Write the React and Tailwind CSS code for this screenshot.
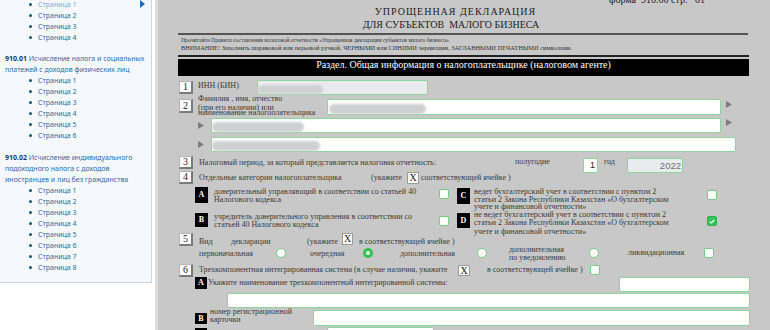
import React from "react";

function Bullet({ children, light, arrow }) {
  return (
    <li className="flex items-center pl-[29px] pr-[6px]">
      <span className="w-[3px] h-[3px] rounded-full bg-[#1d4f82] mr-[6px] shrink-0" />
      <span className={light ? "text-[#7aa9d9]" : "text-[#2f6aa6]"}>{children}</span>
      {arrow && (
        <svg className="ml-auto" width="5" height="8" viewBox="0 0 5 8">
          <path d="M0 0 L5 4 L0 8 Z" fill="#2368ad" />
        </svg>
      )}
    </li>
  );
}

function Sidebar() {
  return (
    <div className="w-[152px] shrink-0 self-start h-[283px] bg-[#f5f9fd] border-r border-b border-[#c8d5e3] font-['Noto_Sans',sans-serif] text-[7px] leading-[11px] overflow-hidden">
      <div className="-mt-[1.5px]">
        <ul>
          <Bullet light arrow>Страница 1</Bullet>
          <Bullet>Страница 2</Bullet>
          <Bullet>Страница 3</Bullet>
          <Bullet>Страница 4</Bullet>
        </ul>
        <p className="mt-[10px] pl-[5px] text-[#2f6aa6] whitespace-nowrap">
          <b className="text-[#17375e]">910.01</b> Исчисление налога и социальных
          <br />
          платежей с доходов физических лиц
        </p>
        <ul>
          <Bullet>Страница 1</Bullet>
          <Bullet>Страница 2</Bullet>
          <Bullet>Страница 3</Bullet>
          <Bullet>Страница 4</Bullet>
          <Bullet>Страница 5</Bullet>
          <Bullet>Страница 6</Bullet>
        </ul>
        <p className="mt-[11px] pl-[5px] text-[#2f6aa6] whitespace-nowrap">
          <b className="text-[#17375e]">910.02</b> Исчисление индивидуального
          <br />
          подоходного налога с доходов
          <br />
          иностранцев и лиц без гражданства
        </p>
        <ul>
          <Bullet>Страница 1</Bullet>
          <Bullet>Страница 2</Bullet>
          <Bullet>Страница 3</Bullet>
          <Bullet>Страница 4</Bullet>
          <Bullet>Страница 5</Bullet>
          <Bullet>Страница 6</Bullet>
          <Bullet>Страница 7</Bullet>
          <Bullet>Страница 8</Bullet>
        </ul>
      </div>
    </div>
  );
}

function NumBox({ n, className = "" }) {
  return (
    <div
      className={
        "ml-[1px] w-[14px] h-[13px] shrink-0 bg-white border-l border-t border-l-[#b5b5b5] border-t-[#b5b5b5] border-r-2 border-b-2 border-r-[#7a7a7a] border-b-[#7a7a7a] flex items-center justify-center text-[10px] leading-none text-[#222] " +
        className
      }
    >
      {n}
    </div>
  );
}

function XBox({ className = "" }) {
  return (
    <div
      className={
        "shrink-0 bg-white border border-[#9a9a9a] flex items-center justify-center text-[10px] leading-none text-[#222] " +
        className
      }
    >
      X
    </div>
  );
}

function Letter({ l, className = "" }) {
  return (
    <div
      className={
        "shrink-0 bg-black text-white font-bold text-[8px] leading-none flex items-center justify-center " +
        className
      }
    >
      {l}
    </div>
  );
}

function Check({ checked, className = "" }) {
  return checked ? (
    <div
      className={
        "w-[10px] h-[10px] shrink-0 rounded-[2px] bg-[#35c457] border border-[#2fb24e] flex items-center justify-center " +
        className
      }
    >
      <svg width="6" height="5" viewBox="0 0 6 5">
        <path d="M0.6 2.6 L2.3 4 L5.4 0.8" stroke="white" strokeWidth="1.2" fill="none" />
      </svg>
    </div>
  ) : (
    <div
      className={
        "w-[10px] h-[10px] shrink-0 rounded-[2px] bg-white border border-[#72cc84] " + className
      }
    />
  );
}

function Radio({ checked, className = "" }) {
  return checked ? (
    <div
      className={
        "w-[10px] h-[10px] shrink-0 rounded-full bg-[#2fc24f] flex items-center justify-center " + className
      }
    >
      <div className="w-[4px] h-[4px] rounded-full bg-white" />
    </div>
  ) : (
    <div className={"w-[10px] h-[10px] shrink-0 rounded-full bg-white border border-[#72cc84] " + className} />
  );
}

function Pill({ className = "" }) {
  return <div className={"rounded-full bg-[#cfd0d2] blur-[1px] " + className} />;
}

function Input({ className = "", children }) {
  return (
    <div className={"shrink-0 rounded-[2px] border border-[#8cd59d] " + className}>{children}</div>
  );
}

function ArrowR({ className = "" }) {
  return (
    <svg className={"shrink-0 " + className} width="6" height="7" viewBox="0 0 6 7">
      <path d="M0 0 L6 3.5 L0 7 Z" fill="#7d7d7d" />
    </svg>
  );
}

function Main() {
  return (
    <div className="flex-1 bg-[#c8c8c8] pl-[20px] font-['Liberation_Serif','Times_New_Roman',serif] text-[#3a3a3a] text-[8px] leading-[9px] overflow-hidden">
      <div className="w-[572px]">
        {/* form number */}
        <div className="-mt-[6px] h-[12px] text-[10px] leading-[12px] text-right pr-[45px] text-[#222] whitespace-pre">
          форма  910.00 стр.   01
        </div>
        {/* title */}
        <div className="h-[25px] pr-[26px] text-center text-[10px] leading-[12.5px] text-[#222]">
          <div className="pl-[9px] tracking-[1px] whitespace-nowrap">УПРОЩЕННАЯ ДЕКЛАРАЦИЯ</div>
          <div className="whitespace-pre">ДЛЯ СУБЪЕКТОВ  МАЛОГО БИЗНЕСА</div>
        </div>
        <div className="mt-[2px] w-[570px] h-[2px] bg-[#555]" />
        <div className="mt-[1px] pl-[3px] leading-[8px] text-[#333] whitespace-nowrap">
          <div className="text-[5.7px]">
            Прочитайте Правила составления налоговой отчетности «Упрощенная декларация субъектов малого бизнеса».
          </div>
          <div className="text-[6.4px]">
            ВНИМАНИЕ! Заполнить шариковой или перьевой ручкой, ЧЕРНЫМИ или СИНИМИ чернилами, ЗАГЛАВНЫМИ ПЕЧАТНЫМИ символами.
          </div>
        </div>
        <div className="mt-[3px] w-[571px] h-[2px] bg-[#222]" />
        <div className="mt-[2px] w-[571px] h-[17px] bg-black text-white text-center text-[10px] leading-[11px]">
          Раздел. Общая информация о налогоплательщике (налоговом агенте)
        </div>

        {/* row 1 */}
        <div className="mt-[4px] h-[15px] flex items-start">
          <NumBox n="1" className="mt-[1px]" />
          <div className="ml-[5px] w-[59px] mt-[0.5px] whitespace-nowrap">ИНН (БИН)</div>
          <Input className="w-[171px] h-[15px] bg-[#e9ebee] flex items-end">
            <Pill className="w-[65px] h-[9px]" />
          </Input>
        </div>

        {/* row 2 */}
        <div className="h-[20px] flex items-start">
          <NumBox n="2" className="mt-[4px] h-[14px]" />
          <div className="ml-[5px] w-[129px] -mt-[1.5px] whitespace-nowrap">
            <div>Фамилия , имя, отчество</div>
            <div>(при его наличии) или</div>
            <div className="-mt-[3.5px]">наименование налогоплательщика</div>
          </div>
          <Input className="mt-[4px] w-[394px] h-[16px] bg-white flex items-end">
            <Pill className="ml-[1px] w-[97px] h-[10px]" />
          </Input>
          <ArrowR className="ml-[5px] mt-[6px]" />
        </div>

        {/* row 2b */}
        <div className="mt-[3px] h-[15px] flex items-center">
          <ArrowR className="ml-[20px]" />
          <Input className="ml-[7px] w-[510px] h-[15px] bg-white flex items-end">
            <Pill className="w-[92px] h-[10px]" />
          </Input>
          <ArrowR className="ml-[5px] -mt-[7px]" />
        </div>

        {/* row 2c */}
        <div className="mt-[4px] h-[15px] flex items-center">
          <ArrowR className="ml-[20px]" />
          <Input className="ml-[7px] w-[525px] h-[15px] bg-white flex items-end">
            <Pill className="w-[108px] h-[10px]" />
          </Input>
        </div>

        {/* row 3 */}
        <div className="mt-[3px] h-[16px] flex items-start">
          <NumBox n="3" className="mt-[1px]" />
          <div className="ml-[6px] w-[316px] mt-[3px] whitespace-nowrap">
            Налоговый период, за который представляется налоговая отчетность:
          </div>
          <div className="w-[68px] mt-[2px]">полугодие</div>
          <Input className="mt-[3px] w-[15px] h-[15px] bg-white flex items-center justify-end pr-[2px] font-['Liberation_Sans',sans-serif] text-[9px] text-[#222]">
            1
          </Input>
          <div className="ml-[6px] w-[23px] mt-[2px]">год</div>
          <Input className="mt-[3px] w-[56px] h-[15px] bg-[#e9ebee] flex items-center justify-end pr-[1px] font-['Liberation_Sans',sans-serif] text-[9.5px] text-[#707070]">
            2022
          </Input>
        </div>

        {/* row 4 */}
        <div className="h-[13px] flex items-start">
          <NumBox n="4" />
          <div className="ml-[6px] w-[172px] mt-[1.5px] whitespace-nowrap">Отдельные категории налогоплательщика</div>
          <div className="w-[36px] mt-[1.5px]">(укажите</div>
          <XBox className="w-[12px] h-[12px] mt-[1px]" />
          <div className="ml-[2px] mt-[1.5px] whitespace-nowrap">соответствующей ячейке )</div>
        </div>

        {/* A / C */}
        <div className="mt-[3px] h-[26px] flex items-start leading-[7.6px]">
          <Letter l="A" className="ml-[17px] w-[13px] h-[16px]" />
          <div className="ml-[6px] w-[225px] mt-[1px]">
            <div className="whitespace-nowrap">доверительный управляющий в соответствии со статьей 40</div>
            <div>Налогового кодекса</div>
          </div>
          <Check className="mt-[2px]" />
          <Letter l="C" className="ml-[8px] w-[13px] h-[16px] mt-[1px]" />
          <div className="ml-[4px] w-[233px] mt-[1px] whitespace-nowrap">
            <div>ведет бухгалтерский учет в соответствии с пунктом 2</div>
            <div>статьи 2 Закона Республики Казахстан «О бухгалтерском</div>
            <div>учете и финансовой отчетности»</div>
          </div>
          <Check className="mt-[3px]" />
        </div>

        {/* B / D */}
        <div className="h-[20px] flex items-start leading-[8.3px]">
          <Letter l="B" className="ml-[17px] w-[13px] h-[14px]" />
          <div className="ml-[6px] w-[225px] -mt-[0.5px] whitespace-nowrap">
            <div>учредитель доверительного управления в соответствии со</div>
            <div>статьей 40 Налогового кодекса</div>
          </div>
          <Check className="mt-[3px]" />
          <Letter l="D" className="ml-[8px] w-[13px] h-[15px]" />
          <div className="ml-[4px] w-[233px] -mt-[2px] whitespace-nowrap">
            <div>не ведет бухгалтерский учет в соответствии с пунктом 2</div>
            <div>статьи 2 Закона Республики Казахстан «О бухгалтерском</div>
            <div>учете и финансовой отчетности»</div>
          </div>
          <Check checked className="mt-[3px]" />
        </div>

        {/* row 5 */}
        <div className="h-[12px] flex items-start">
          <NumBox n="5" className="h-[12px]" />
          <div className="ml-[6px] w-[32px] mt-[3.5px]">Вид</div>
          <div className="w-[76px] mt-[3.5px]">декларации</div>
          <div className="w-[35px] mt-[3.5px]">(укажите</div>
          <XBox className="w-[11px] h-[12px]" />
          <div className="ml-[6px] mt-[3.5px] whitespace-nowrap">в соответствующей ячейке )</div>
        </div>
        <div className="mt-[2px] h-[12px] flex items-start">
          <div className="ml-[21px] w-[77px] mt-[1.5px]">первоначальная</div>
          <Radio className="mt-[1px]" />
          <div className="ml-[24px] w-[53px] mt-[1.5px]">очередная</div>
          <Radio checked className="mt-[1px]" />
          <div className="ml-[27px] w-[77px] mt-[1.5px]">дополнительная</div>
          <Radio className="mt-[1px]" />
          <div className="ml-[22px] w-[80px] -mt-[1px] leading-[7.5px] whitespace-nowrap">
            <div>дополнительная</div>
            <div>по уведомлению</div>
          </div>
          <Radio className="mt-[1px]" />
          <div className="ml-[29px] w-[76px] mt-[1px]">ликвидационная</div>
          <Check className="mt-[1px]" />
        </div>

        {/* row 6 */}
        <div className="mt-[5px] h-[13px] flex items-start">
          <NumBox n="6" />
          <div className="ml-[6px] w-[259px] mt-[0.5px] whitespace-nowrap">
            Трехкомпонентная интегрированная система (в случае наличия, укажите
          </div>
          <XBox className="w-[12px] h-[11px] mt-[1px]" />
          <div className="ml-[17px] w-[103px] mt-[0.5px] whitespace-nowrap">в соответствующей ячейке )</div>
          <Check className="mt-[1px] h-[9px]" />
        </div>

        <div className="h-[15px] flex items-start">
          <Letter l="A" className="ml-[17px] w-[12px] h-[12px]" />
          <div className="ml-[1px] w-[411px] mt-[0.5px] whitespace-nowrap">
            Укажите наименование трехкомпонентной интегрированной системы:
          </div>
          <Input className="w-[131px] h-[15px] bg-white" />
        </div>

        <div className="mt-[1px] h-[15px] flex">
          <Input className="ml-[49px] w-[523px] h-[15px] bg-white" />
        </div>

        <div className="mt-[2px] h-[16px] flex items-start leading-[8.3px]">
          <Letter l="B" className="ml-[17px] w-[12px] h-[11px] mt-[3px]" />
          <div className="ml-[3px] w-[103px] -mt-[2.5px] whitespace-nowrap">
            <div>номер регистрационной</div>
            <div>карточки</div>
          </div>
          <Input className="w-[437px] h-[16px] bg-white" />
        </div>

        <div className="mt-[1px] h-[15px] flex items-start">
          <Letter l="C" className="ml-[17px] w-[12px] h-[12px] mt-[1px]" />
          <Input className="ml-[120px] w-[107px] h-[15px] bg-white" />
        </div>
      </div>
    </div>
  );
}

export default function App() {
  return (
    <div className="flex h-[330px] w-[770px] overflow-hidden bg-white">
      <Sidebar />
      <div className="w-[3px] shrink-0 bg-white" />
      <div className="w-[3px] shrink-0 bg-[#dcdcdc]" />
      <Main />
    </div>
  );
}
